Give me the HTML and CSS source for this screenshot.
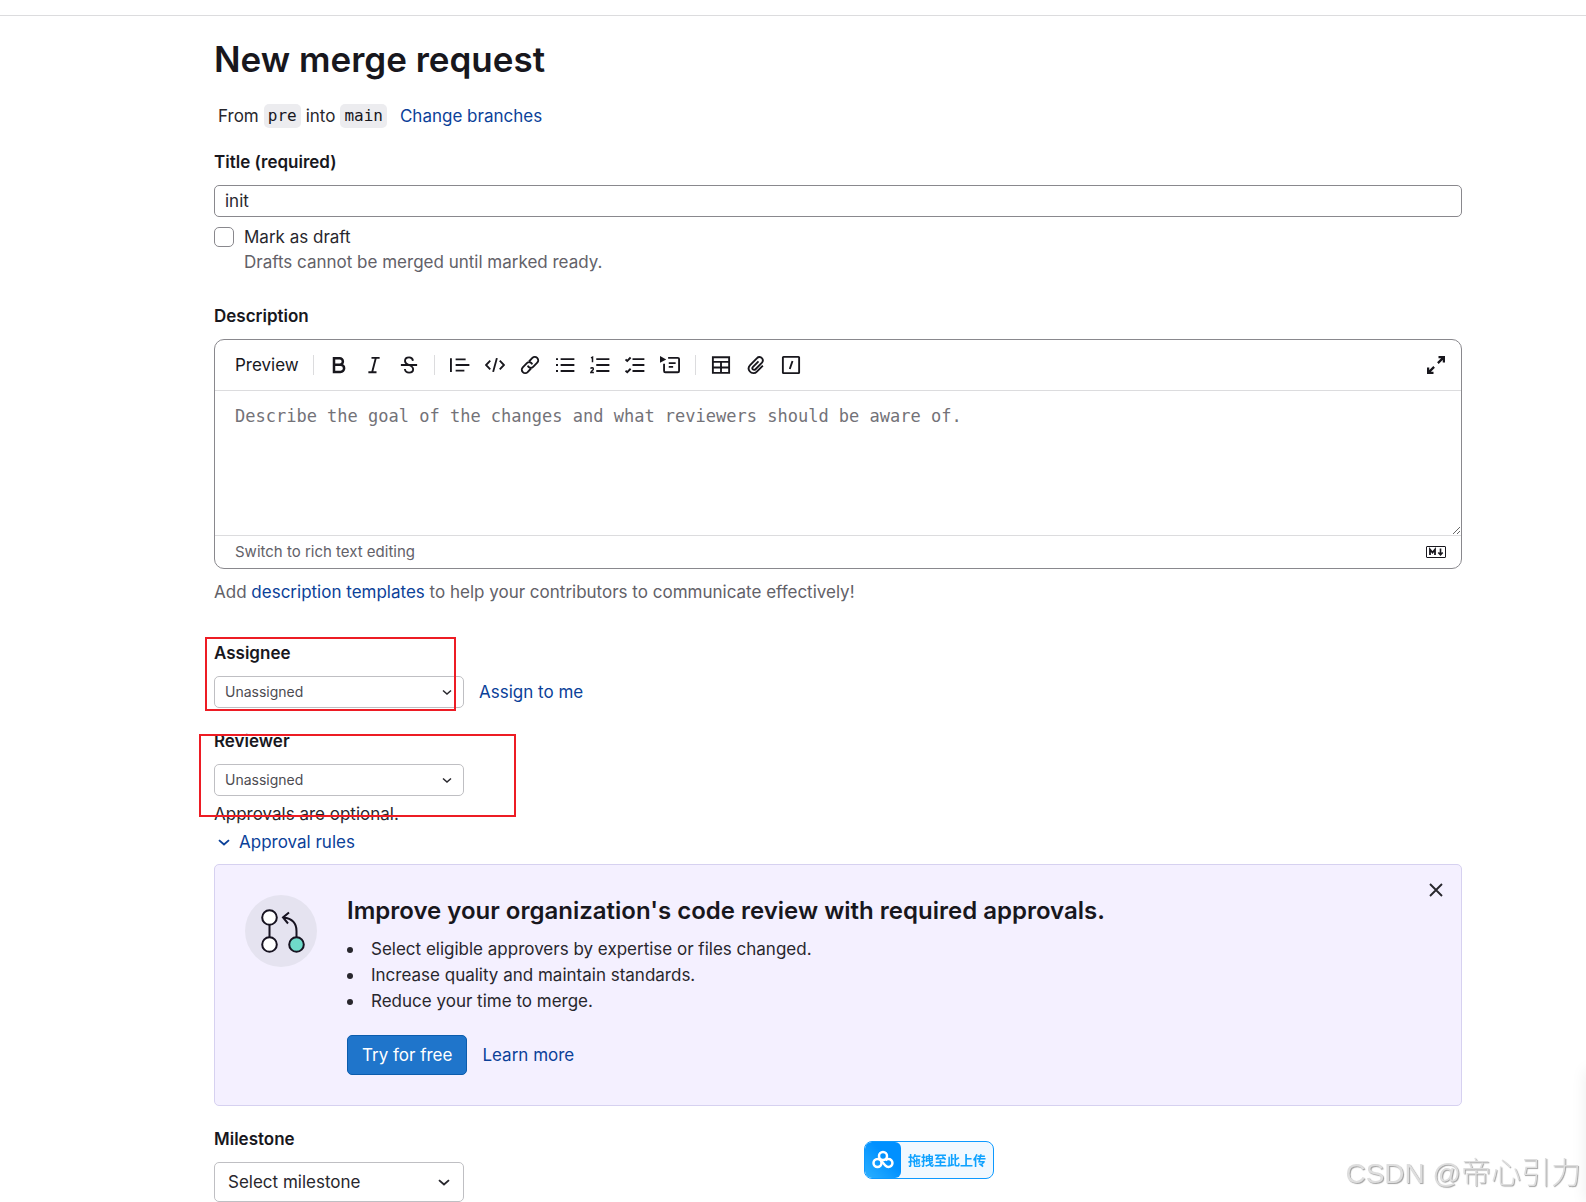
FILE: index.html
```html
<!DOCTYPE html>
<html lang="en">
<head>
    <meta charset="UTF-8">
    <meta name="viewport" content="width=device-width, initial-scale=1.0">
    <title>New merge request</title>
    <link rel="stylesheet" href="styles.css">
</head>
<body>
    <div class="topbar"></div>

    <main class="container">
        <h1>New merge request</h1>

        <form>
            <div class="branches">
                From <code>pre</code> into <code>main</code>
                <a href="#" class="change-link">Change branches</a>
            </div>

            <label class="label" for="title">Title (required)</label>
            <input class="text-input" type="text" id="title" value="init">

            <div class="draft">
                <input type="checkbox" id="draft">
                <div>
                    <label for="draft">Mark as draft</label>
                    <p class="muted">Drafts cannot be merged until marked ready.</p>
                </div>
            </div>

            <label class="label" for="description">Description</label>
            <div class="editor">
                <div class="toolbar">
                    <button type="button" class="preview-btn">Preview</button>
                    <span class="separator"></span>
                    <button type="button" class="tool" aria-label="Bold">
                        <svg viewBox="0 0 16 16"><path d="M4 2.5h4.5a2.6 2.6 0 0 1 0 5.2H4zM4 7.7h5.2a2.9 2.9 0 0 1 0 5.8H4z" stroke-width="2"/></svg>
                    </button>
                    <button type="button" class="tool" aria-label="Italic">
                        <svg viewBox="0 0 16 16"><path d="M6 2.25h6.5M3.5 13.75H10M9.5 2.25l-3 11.5"/></svg>
                    </button>
                    <button type="button" class="tool" aria-label="Strikethrough">
                        <svg viewBox="0 0 16 16"><path d="M1.5 8h13M11.2 4.6C10.9 2.9 9.7 1.9 8.1 1.9 6.2 1.9 4.8 3 4.8 4.7 4.8 6.5 6.2 7.3 8 8s3.3 1.6 3.3 3.4-1.4 2.7-3.2 2.7-3.2-1.1-3.4-2.9"/></svg>
                    </button>
                    <span class="separator"></span>
                    <button type="button" class="tool" aria-label="Quote">
                        <svg viewBox="0 0 16 16"><path d="M.75 2.5v11M4.5 3.5h8M4.5 8h11M4.5 12.5h7"/></svg>
                    </button>
                    <button type="button" class="tool" aria-label="Code">
                        <svg viewBox="0 0 16 16"><path d="M4.2 4.5.8 8l3.4 3.5M11.8 4.5 15.2 8l-3.4 3.5M9.5 2.5l-3 11"/></svg>
                    </button>
                    <button type="button" class="tool" aria-label="Link">
                        <svg viewBox="0 0 16 16"><path d="M7.2 5.2l2.7-2.9a2.7 2.7 0 0 1 3.9 3.8L10.5 9.5a2.6 2.6 0 0 1-4.3-1M8.8 10.8l-2.7 2.9a2.7 2.7 0 0 1-3.9-3.8L5.5 6.5a2.6 2.6 0 0 1 4.3 1"/></svg>
                    </button>
                    <button type="button" class="tool" aria-label="Bullet list">
                        <svg viewBox="0 0 16 16"><path d="M4.5 3.25h11M4.5 8h11M4.5 12.75h11"/><path d="M.8 3.25h1.6M.8 8h1.6M.8 12.75h1.6"/></svg>
                    </button>
                    <button type="button" class="tool" aria-label="Numbered list">
                        <svg viewBox="0 0 16 16"><path d="M5 3.25h10.5M5 8h10.5M5 12.75h10.5"/><path d="M.8 2.3l1.2-.6v4M.5 10.8c.6-1 2.2-.7 2.2.3 0 .9-1.5 1.6-2 2.9h2.4" stroke-width="1.2"/></svg>
                    </button>
                    <button type="button" class="tool" aria-label="Task list">
                        <svg viewBox="0 0 16 16"><path d="M6 3.25h9.5M6 8h9.5M6 12.75h9.5"/><path d="M.4 3.5l1.4 1.3L4.5 2M.4 12.5l1.4 1.3L4.5 11"/></svg>
                    </button>
                    <button type="button" class="tool" aria-label="Collapsible section">
                        <svg viewBox="0 0 16 16"><path d="M6.5 2.25h7.75a1 1 0 0 1 1 1v9.5a1 1 0 0 1-1 1H4.25a1 1 0 0 1-1-1V7M7 6.5h5.5M7 9.5h3.5"/><path d="M0 .8v5.4L5 3.5z" class="solid"/></svg>
                    </button>
                    <span class="separator"></span>
                    <button type="button" class="tool" aria-label="Table">
                        <svg viewBox="0 0 16 16"><path d="M1.5 1.75h13v12.5h-13zM1.5 5.5h13M1.5 10h13M8 5.5v8.5"/></svg>
                    </button>
                    <button type="button" class="tool" aria-label="Attach a file">
                        <svg viewBox="0 0 16 16"><path d="M13.5 8.5l-4.8 4.8a3.7 3.7 0 0 1-5.6-.1c-1.3-1.5-1.2-3.6.2-5.1l5.5-5.6a2.6 2.6 0 0 1 4 .1c.9 1.1.8 2.6-.2 3.7L7.6 11.4c-.7.7-1.6.6-2.1.1s-.5-1.4.1-2L10 5.1"/></svg>
                    </button>
                    <button type="button" class="tool" aria-label="Quick action">
                        <svg viewBox="0 0 16 16"><rect x="1.5" y="1.5" width="13" height="13" rx=".5"/><path d="M9.2 4.8l-2.2 6.4"/></svg>
                    </button>
                    <button type="button" class="tool fullscreen" aria-label="Full screen">
                        <svg viewBox="0 0 16 16"><path d="M10 1.7h4.3V6M14.3 1.7 9.5 6.5M6 14.3H1.7V10M1.7 14.3l4.8-4.8" stroke-width="1.8"/></svg>
                    </button>
                </div>
                <textarea id="description" placeholder="Describe the goal of the changes and what reviewers should be aware of."></textarea>
                <div class="editor-footer">
                    <button type="button" class="switch-btn">Switch to rich text editing</button>
                    <a href="#" class="markdown" aria-label="Markdown is supported">
                        <svg viewBox="0 0 20 12"><rect x=".5" y=".5" width="19" height="11" rx=".5" stroke-width="1"/><path d="M4 9V3.5l2.5 3 2.5-3V9" stroke-width="1.8"/><path d="M14.5 2.5v6M12.3 6.5l2.2 2.3 2.2-2.3" stroke-width="1.6"/></svg>
                    </a>
                </div>
            </div>
            <p class="muted help">Add <a href="#">description templates</a> to help your contributors to communicate effectively!</p>

            <div class="field assignee">
                <label class="label" for="assignee">Assignee</label>
                <div class="row">
                    <div class="select">
                        <select id="assignee"><option>Unassigned</option></select>
                        <svg viewBox="0 0 16 16"><path d="M4 6.5l4 3.5 4-3.5"/></svg>
                    </div>
                    <a href="#">Assign to me</a>
                </div>
                <div class="mark"></div>
            </div>

            <div class="field reviewer">
                <label class="label" for="reviewer">Reviewer</label>
                <div class="select">
                    <select id="reviewer"><option>Unassigned</option></select>
                    <svg viewBox="0 0 16 16"><path d="M4 6.5l4 3.5 4-3.5"/></svg>
                </div>
                <p class="approvals">Approvals are optional.</p>
                <div class="mark"></div>
            </div>

            <button type="button" class="rules-btn">
                <svg viewBox="0 0 16 16"><path d="M4 6.5l4 3.5 4-3.5"/></svg>
                Approval rules
            </button>

            <section class="banner">
                <svg class="banner-icon" viewBox="0 0 72 72">
                    <circle cx="36" cy="36" r="36" fill="#e5e3f0"/>
                    <g stroke="#171321" stroke-width="2" fill="none">
                        <path d="M24.5 30v12M51.5 42v-6c0-8-4-12.5-13-13.5M44 17.5l-6 5 5 6"/>
                        <circle cx="24.5" cy="22.5" r="7.3" fill="#fff"/>
                        <circle cx="24.5" cy="49.5" r="7.3" fill="#fff"/>
                        <circle cx="51.5" cy="49.5" r="7.3" fill="#6fdac9"/>
                    </g>
                </svg>
                <div class="banner-body">
                    <h2>Improve your organization's code review with required approvals.</h2>
                    <ul>
                        <li>Select eligible approvers by expertise or files changed.</li>
                        <li>Increase quality and maintain standards.</li>
                        <li>Reduce your time to merge.</li>
                    </ul>
                    <div class="banner-actions">
                        <button type="button" class="btn-primary">Try for free</button>
                        <a href="#">Learn more</a>
                    </div>
                </div>
                <button type="button" class="close-btn" aria-label="Dismiss">
                    <svg viewBox="0 0 16 16"><path d="M3.2 3.2l9.6 9.6M12.8 3.2l-9.6 9.6"/></svg>
                </button>
            </section>

            <div class="milestone">
                <label class="label" for="milestone">Milestone</label>
                <div class="select large">
                    <select id="milestone"><option>Select milestone</option></select>
                    <svg viewBox="0 0 16 16"><path d="M4 6.5l4 3.5 4-3.5"/></svg>
                </div>
            </div>
        </form>
    </main>

    <button type="button" class="upload">
        <span class="upload-icon">
            <svg viewBox="0 0 24 20"><circle cx="12" cy="6" r="4"/><circle cx="6.5" cy="13" r="4"/><path d="M10 10.5l4.5 5.2a4 4 0 1 0 0-5.4"/></svg>
        </span>
        <span class="upload-text" lang="zh-CN">拖拽至此上传</span>
    </button>

    <div class="side-panel"></div>
    <div class="watermark" lang="zh-CN">CSDN @<span>帝心引力</span></div>
</body>
</html>
```

FILE: styles.css
```css
* {
    margin: 0;
    padding: 0;
    box-sizing: border-box;
}

body {
    font-family: Inter, 'Noto Sans CJK SC', sans-serif;
    font-size: 17px;
    line-height: 24px;
    color: #28272d;
    background: white;
}

button,
input,
select,
textarea {
    font: inherit;
    color: inherit;
}

button {
    background: none;
    border: none;
    cursor: pointer;
}

a {
    color: #0b4199;
    text-decoration: none;
}

svg {
    display: block;
    fill: none;
    stroke: currentColor;
    stroke-width: 1.5;
}

.topbar {
    height: 16px;
    border-bottom: 1px solid #dcdcde;
}

.container {
    padding: 19px 124px 0 214px;
}

h1 {
    font-size: 35px;
    font-weight: 600;
    line-height: 48px;
    color: #18171d;
}

.branches {
    display: flex;
    align-items: center;
    gap: 5px;
    margin: 21px 0 23px;
    padding-left: 4px;
}

code {
    padding: 0 4px;
    font-family: 'DejaVu Sans Mono', monospace;
    font-size: 16px;
    border-radius: 5px;
    background: #ececef;
    color: #18171d;
}

.change-link {
    margin-left: 8px;
}

.label {
    display: block;
    margin-bottom: 12px;
    font-weight: 600;
    line-height: 22px;
    color: #18171d;
}

.text-input {
    display: block;
    width: 100%;
    height: 32px;
    padding: 0 10px;
    border: 1px solid #89888d;
    border-radius: 5px;
    background: white;
}

.draft {
    display: flex;
    gap: 10px;
    margin: 8px 0 30px;
    line-height: 25px;
}

.draft input {
    width: 20px;
    height: 20px;
    margin-top: 2px;
    appearance: none;
    border: 1px solid #89888d;
    border-radius: 5px;
}

.muted {
    color: #626168;
}

.editor {
    border: 1px solid #89888d;
    border-radius: 10px;
    overflow: hidden;
}

.toolbar {
    display: flex;
    align-items: center;
    gap: 5px;
    height: 51px;
    padding: 0 10px;
    border-bottom: 1px solid #dcdcde;
    color: #18171d;
}

.preview-btn {
    padding: 0 4px 0 10px;
}

.separator {
    width: 1px;
    height: 20px;
    margin: 0 5px;
    background: #dcdcde;
}

.tool {
    display: flex;
    align-items: center;
    justify-content: center;
    width: 30px;
    height: 30px;
}

.tool svg {
    width: 20px;
    height: 20px;
}

.tool .solid {
    fill: currentColor;
    stroke: none;
}

.fullscreen {
    margin-left: auto;
}

textarea {
    display: block;
    width: 100%;
    height: 144px;
    padding: 13px 20px;
    border: none;
    font-family: 'DejaVu Sans Mono', monospace;
    resize: vertical;
}

textarea::placeholder {
    color: #737278;
}

.editor-footer {
    display: flex;
    align-items: center;
    justify-content: space-between;
    height: 33px;
    padding: 0 15px 0 20px;
    border-top: 1px solid #dcdcde;
}

.switch-btn {
    font-size: 15px;
    color: #626168;
}

.markdown {
    color: #18171d;
}

.markdown svg {
    width: 20px;
    height: 12px;
}

.help {
    margin: 11px 0 38px;
}

.field {
    position: relative;
}

.row {
    display: flex;
    align-items: center;
    gap: 15px;
}

.select {
    position: relative;
    width: 250px;
}

.select select {
    display: block;
    width: 100%;
    height: 32px;
    padding: 0 10px;
    appearance: none;
    border: 1px solid #bfbfc3;
    border-radius: 5px;
    background: white;
    font-size: 14px;
    color: #4c4b51;
}

.select svg {
    position: absolute;
    top: 8px;
    right: 9px;
    width: 16px;
    height: 16px;
    color: #28272d;
    pointer-events: none;
}

.select.large select {
    height: 40px;
    padding: 0 13px;
    font-size: 17px;
    color: #28272d;
}

.select.large svg {
    top: 10px;
    right: 10px;
    width: 20px;
    height: 20px;
}

.assignee {
    margin-bottom: 22px;
}

/* red highlight boxes around the two people pickers */
.mark {
    position: absolute;
    border: 2px solid #ed1c24;
    pointer-events: none;
}

.assignee .mark {
    top: -5px;
    left: -9px;
    width: 251px;
    height: 74px;
}

.reviewer .mark {
    top: 4px;
    left: -15px;
    width: 317px;
    height: 83px;
}

.approvals {
    margin: 6px 0 4px;
}

.rules-btn {
    display: flex;
    align-items: center;
    gap: 5px;
    color: #0b4199;
}

.rules-btn svg {
    width: 20px;
    height: 20px;
}

.banner {
    display: flex;
    gap: 30px;
    position: relative;
    margin: 10px 0 22px;
    padding: 30px;
    border: 1px solid #d6d1f0;
    border-radius: 5px;
    background: #f4f0ff;
}

.banner-icon {
    flex: none;
    width: 72px;
    height: 72px;
    stroke: none;
}

.banner h2 {
    font-size: 24px;
    font-weight: 600;
    line-height: 32px;
    color: #18171d;
}

.banner ul {
    margin: 9px 0 21px;
    list-style: none;
}

.banner li {
    position: relative;
    padding-left: 24px;
    line-height: 26px;
}

.banner li::before {
    content: '';
    position: absolute;
    top: 11px;
    left: 0;
    width: 6px;
    height: 6px;
    border-radius: 50%;
    background: #28272d;
}

.banner-actions {
    display: flex;
    align-items: center;
    gap: 15px;
}

.btn-primary {
    height: 40px;
    padding: 0 14px;
    border: 1px solid #0b5cad;
    border-radius: 5px;
    background: #1f75cb;
    color: white;
}

.close-btn {
    position: absolute;
    top: 15px;
    right: 15px;
}

.close-btn svg {
    width: 20px;
    height: 20px;
}

.upload {
    display: flex;
    align-items: center;
    position: fixed;
    right: 592px;
    bottom: 23px;
    width: 130px;
    height: 38px;
    border: 1px solid #0d99ff;
    border-radius: 8px;
    background: #f0f8ff;
    overflow: hidden;
}

.upload-icon {
    display: flex;
    align-items: center;
    justify-content: center;
    width: 36px;
    height: 36px;
    border-radius: 6px;
    background: linear-gradient(45deg, #2cb0ff, #0090ff 60%);
    color: white;
}

.upload-icon svg {
    width: 24px;
    height: 20px;
    stroke-width: 2.5;
}

.upload-text {
    flex: 1;
    font-family: 'Noto Sans CJK SC', sans-serif;
    font-size: 13px;
    font-weight: 700;
    color: #0fa2ff;
}

.side-panel {
    position: fixed;
    top: 1070px;
    bottom: 0;
    left: 100%;
    width: 40px;
    box-shadow: 0 0 16px rgba(0, 0, 0, 0.08);
}

.watermark {
    position: fixed;
    right: 5px;
    bottom: 8px;
    font-family: 'Liberation Sans', 'Noto Sans CJK SC', sans-serif;
    font-size: 28px;
    font-weight: 300;
    line-height: 40px;
    color: #dedede;
    text-shadow: 1px 1px 1px #a0a0a0;
    pointer-events: none;
}

.watermark span {
    font-size: 30px;
}
```
